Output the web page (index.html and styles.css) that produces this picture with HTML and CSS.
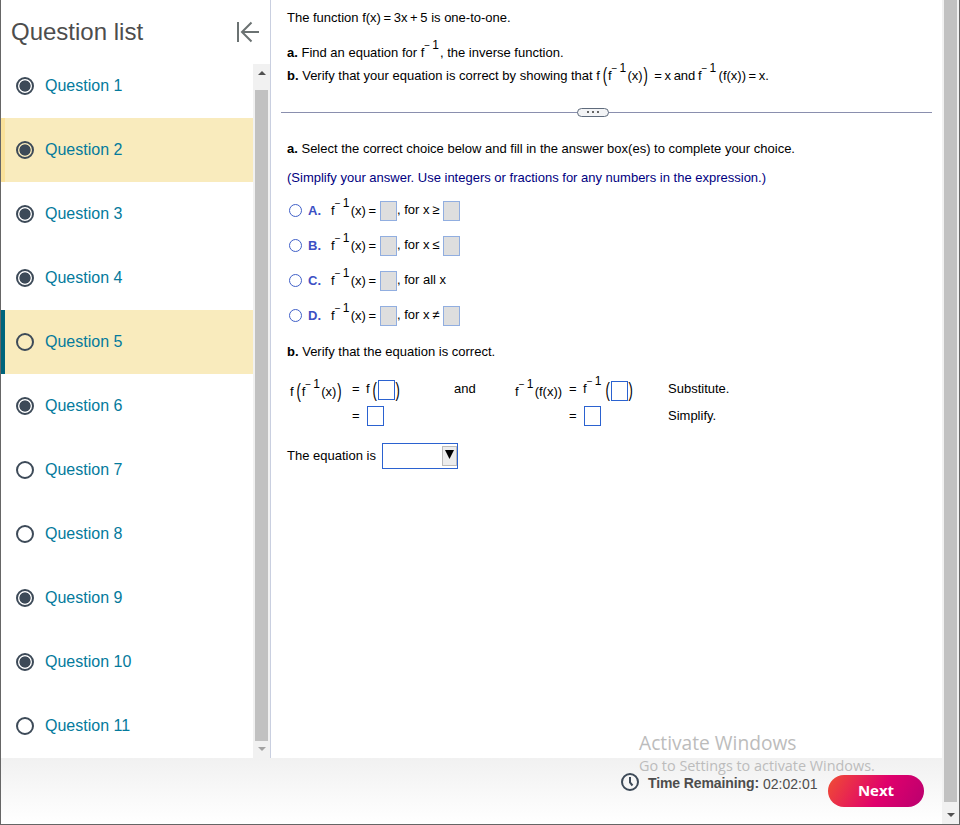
FILE: index.html
```html
<!DOCTYPE html>
<html lang="en">
<head>
    <meta charset="UTF-8">
    <meta name="viewport" content="width=device-width, initial-scale=1.0">
    <title>Question list</title>
    <link rel="stylesheet" href="styles.css">
</head>
<body>
<div class="window">
    <div class="page">
        <div class="top">
            <aside class="sidebar">
                <header class="sidebar-header">
                    <h1>Question list</h1>
                    <svg class="collapse" width="24" height="22" viewBox="0 0 24 22" fill="none" stroke="#6b7272" stroke-width="2">
                        <path d="M2 1v20M23 11H6M15.500 1.500L6 11l9.500 9.500"/>
                    </svg>
                </header>
                <div class="list-wrap">
                    <ul class="list">
                        <li><span class="dot done"></span><a>Question 1</a></li>
                        <li class="marked"><span class="dot done"></span><a>Question 2</a></li>
                        <li><span class="dot done"></span><a>Question 3</a></li>
                        <li><span class="dot done"></span><a>Question 4</a></li>
                        <li class="marked current"><span class="dot"></span><a>Question 5</a></li>
                        <li><span class="dot done"></span><a>Question 6</a></li>
                        <li><span class="dot"></span><a>Question 7</a></li>
                        <li><span class="dot"></span><a>Question 8</a></li>
                        <li><span class="dot done"></span><a>Question 9</a></li>
                        <li><span class="dot done"></span><a>Question 10</a></li>
                        <li><span class="dot"></span><a>Question 11</a></li>
                    </ul>
                    <div class="scrollbar">
                        <span class="arrow up"></span>
                        <span class="thumb"></span>
                        <span class="arrow down light"></span>
                    </div>
                </div>
            </aside>

            <main class="content">
                <p class="line">The function <span class="m">f(x) = 3x + 5</span> is one-to-one.</p>
                <p class="line find"><b>a.</b> Find an equation for f<span class="sup"><i>−</i>1</span> , the inverse function.</p>
                <p class="line show"><b>b.</b> Verify that your equation is correct by showing that f<span class="big open">(</span>f<span class="sup"><i>−</i>1</span>(x)<span class="big">)</span> <span class="m eq">= x and f<span class="sup"><i>−</i>1</span>(f(x)) = x.</span></p>

                <div class="divider"><span class="pill"><i></i><i></i><i></i></span></div>

                <p class="line select"><b>a.</b> Select the correct choice below and fill in the answer box(es) to complete your choice.</p>
                <p class="line hint">(Simplify your answer. Use integers or fractions for any numbers in the expression.)</p>

                <div class="choices">
                    <div class="choice"><span class="radio"></span><b>A.</b><span class="fn m">f<span class="sup"><i>−</i>1</span>(x) =</span><span class="box off"></span><span class="for">, for <span class="m">x ≥</span></span><span class="box off"></span></div>
                    <div class="choice"><span class="radio"></span><b>B.</b><span class="fn m">f<span class="sup"><i>−</i>1</span>(x) =</span><span class="box off"></span><span class="for">, for <span class="m">x ≤</span></span><span class="box off"></span></div>
                    <div class="choice"><span class="radio"></span><b>C.</b><span class="fn m">f<span class="sup"><i>−</i>1</span>(x) =</span><span class="box off"></span><span class="for">, for all x</span></div>
                    <div class="choice"><span class="radio"></span><b>D.</b><span class="fn m">f<span class="sup"><i>−</i>1</span>(x) =</span><span class="box off"></span><span class="for">, for <span class="m">x ≠</span></span><span class="box off"></span></div>
                </div>

                <p class="line verify"><b>b.</b> Verify that the equation is correct.</p>

                <div class="proof">
                    <span class="low">f<span class="big open">(</span>f<span class="sup"><i>−</i>1</span>(x)<span class="big">)</span></span>
                    <span>=</span>
                    <span class="rhs first">f<span class="big open">(</span><span class="box"></span><span class="big">)</span></span>
                    <span>and</span>
                    <span class="low">f<span class="sup"><i>−</i>1</span>(f(x))</span>
                    <span>=</span>
                    <span class="rhs">f<span class="sup"><i>−</i>1</span><span class="big open">(</span><span class="box"></span><span class="big">)</span></span>
                    <span>Substitute.</span>
                    <span></span>
                    <span>=</span>
                    <span class="rhs only"><span class="box"></span></span>
                    <span></span>
                    <span></span>
                    <span>=</span>
                    <span class="rhs only"><span class="box"></span></span>
                    <span>Simplify.</span>
                </div>

                <div class="result">
                    <span class="label">The equation is</span>
                    <span class="dropdown"><span class="drop-button"><svg width="9" height="9" viewBox="0 0 9 9"><path d="M0 0h9L4.500 9z"/></svg></span></span>
                </div>
            </main>
        </div>

        <footer class="footer">
            <svg class="clock" width="18" height="18" viewBox="0 0 18 18" fill="none" stroke="#3d4a58" stroke-width="2">
                <circle cx="9" cy="9" r="8"/>
                <path d="M9 4v5.500l2.500 3"/>
            </svg>
            <b>Time Remaining:</b>
            <span class="time">02:02:01</span>
            <button type="button" class="next">Next</button>
        </footer>

        <div class="watermark">
            <div class="wm-title">Activate Windows</div>
            <div class="wm-text">Go to Settings to activate Windows.</div>
        </div>
    </div>
    <div class="scrollbar page-scroll">
        <span class="thumb"></span>
        <span class="arrow down"></span>
    </div>
</div>
</body>
</html>
```
FILE: styles.css
```css
* {
    box-sizing: border-box;
}
body {
    margin: 0;
    background-color: white;
    color: black;
    font-family: "Liberation Sans", Arial, sans-serif;
    font-size: 13px;
}
.window {
    display: flex;
    width: 960px;
    height: 825px;
    border: 1px solid #666666;
    border-top: none;
    overflow: hidden;
}
.page {
    position: relative;
    display: flex;
    flex-direction: column;
    width: 941px;
}
.top {
    display: flex;
    height: 758px;
}

/* sidebar */
.sidebar {
    display: flex;
    flex-direction: column;
    width: 270px;
    border-right: 1px solid #c9cfe0;
}
.sidebar-header {
    display: flex;
    align-items: center;
    justify-content: space-between;
    height: 64px;
    padding: 0 10px;
}
.sidebar-header h1 {
    margin: 0;
    color: #4d4d4d;
    font-size: 24px;
    font-weight: normal;
    line-height: 64px;
}
.list-wrap {
    display: flex;
    height: 694px;
}
.list {
    width: 252px;
    margin: 0;
    padding: 0;
    list-style: none;
    overflow: hidden;
}
.list li {
    display: flex;
    align-items: center;
    height: 64px;
    padding-left: 11px;
    border-left: 4px solid transparent;
    font-size: 16px;
}
.list li:first-child {
    height: 54px;
    padding-bottom: 10px;
}
.list li.marked {
    background-color: #f9ebbd;
    border-left-color: #fae19a;
}
.list li.current {
    border-left-color: #00647b;
}
.list a {
    color: #047a9c;
    line-height: 20px;
}
.dot {
    width: 18px;
    height: 18px;
    margin-right: 11px;
    border: 2px solid #3d4a58;
    border-radius: 50%;
}
.dot.done {
    background-image: radial-gradient(circle at center, #3d4a58 5.2px, transparent 6px);
}

/* scrollbars */
.scrollbar {
    display: flex;
    flex-direction: column;
    align-items: center;
    width: 17px;
    background-color: #f1f1f1;
}
.thumb {
    flex: 1;
    width: 13px;
    background-color: #c1c1c1;
}
.arrow {
    height: 17px;
    display: flex;
    align-items: center;
}
.arrow.up {
    height: 26px;
    padding-bottom: 8px;
}
.arrow::after {
    content: "";
    border-left: 4px solid transparent;
    border-right: 4px solid transparent;
}
.arrow.up::after {
    border-bottom: 4px solid #505050;
}
.arrow.down::after {
    border-top: 4px solid #505050;
}
.arrow.light {
    padding-bottom: 2px;
}
.arrow.light::after {
    border-top-color: #a3a3a3;
}
.page-scroll {
    padding-bottom: 2px;
}
.page-scroll .arrow {
    height: 20px;
    padding-top: 6px;
}

/* exercise */
.content {
    flex: 1;
    padding: 8px 10px 0 16px;
}
.line {
    height: 20px;
    margin: 0;
    line-height: 20px;
    white-space: nowrap;
}
.find {
    margin-top: 15px;
}
.show {
    margin-top: 3px;
}
.select {
    margin-top: 21px;
}
.hint {
    margin-top: 9px;
    color: #00007f;
}
.m {
    word-spacing: -1px;
}
.eq {
    margin-left: 2px;
}
.sup {
    position: relative;
    top: -8px;
    display: inline-block;
    width: 16px;
    line-height: 1;
    font-size: 12px;
}
.find .sup {
    margin-right: -4px;
}
.eq .sup {
    width: 17px;
}
.sup i {
    display: inline-block;
    width: 8px;
    font-size: 10px;
    font-style: normal;
}
/* tall, thin parentheses */
.big {
    display: inline-block;
    width: 6px;
    line-height: 1;
    text-align: center;
    transform: scaleY(1.5);
}
.big.open {
    margin-left: 2px;
}
.divider {
    display: flex;
    align-items: center;
    justify-content: center;
    height: 12px;
    margin: 20px 0 0 -6px;
    background: linear-gradient(#8a8fae, #8a8fae) 0 6px / 100% 1px no-repeat;
}
.pill {
    display: flex;
    align-items: center;
    justify-content: center;
    gap: 3px;
    width: 32px;
    height: 9px;
    margin-left: -28px;
    border: 1px solid #5f6b7c;
    border-radius: 5px;
    background-color: #f3f4f6;
}
.pill i {
    width: 2px;
    height: 2px;
    background-color: #666666;
}
.choices {
    margin-top: 10px;
}
.choice {
    display: flex;
    height: 35px;
    padding-left: 2px;
    line-height: 24px;
    white-space: nowrap;
}
.radio {
    width: 13px;
    height: 13px;
    margin: 6px 6px 0 0;
    border: 1px solid #4060c8;
    border-radius: 50%;
}
.choice b {
    width: 23px;
    padding-top: 1px;
    color: #3c50c4;
}
.fn {
    width: 49px;
    padding-top: 1px;
}
.box {
    display: inline-block;
    width: 17px;
    height: 20px;
    border: 1px solid #2b62d0;
    background-color: white;
}
.box.off {
    margin-top: 3px;
    border-color: #91aee0;
    background-color: #dedede;
}
.for {
    width: 46px;
}
.verify {
    margin-top: 4px;
}
.proof {
    display: grid;
    grid-template-columns: 62px 14px 88px 61px 54px 14px 85px 80px;
    grid-template-rows: 27px 27px;
    margin-top: 17px;
    padding-left: 3px;
    line-height: 20px;
    white-space: nowrap;
}
.low {
    padding-top: 3px;
}
.rhs {
    display: flex;
    height: 24px;
}
.rhs .sup {
    line-height: 20px;
}
.rhs .big {
    height: 20px;
    margin-top: 2px;
    line-height: 20px;
}
.rhs .box {
    margin-top: 2px;
}
.rhs.first .box {
    margin-top: 1px;
}
.rhs.only .box {
    margin: 0 0 0 1px;
}
.result {
    display: flex;
    margin-top: 10px;
}
.label {
    width: 95px;
    line-height: 26px;
}
.dropdown {
    display: flex;
    justify-content: flex-end;
    width: 76px;
    height: 26px;
    padding: 2px 0;
    border: 1px solid #2b62d0;
}
.drop-button {
    display: flex;
    justify-content: center;
    width: 15px;
    height: 20px;
    padding-top: 3px;
    border: 1px solid #bbbbbb;
    background-color: #ececec;
}

/* footer */
.footer {
    display: flex;
    height: 66px;
    padding-left: 620px;
    background-image: linear-gradient(#f1f1f1, #ffffff);
    color: #4d4d4d;
    font-size: 14px;
    line-height: 20px;
    white-space: nowrap;
}
.clock {
    margin: 15px 9px 0 0;
}
.footer b {
    width: 115px;
    padding-top: 15px;
    letter-spacing: -0.1px;
}
.time {
    width: 65px;
    padding-top: 16px;
}
.next {
    width: 96px;
    height: 32px;
    margin-top: 17px;
    padding: 0 0 2px;
    border: none;
    border-radius: 16px;
    background-image: linear-gradient(120deg, #f04e33, #e0006c 55%, #b9006f);
    color: white;
    font-family: "Open Sans", sans-serif;
    font-size: 15px;
    font-weight: bold;
}
.watermark {
    position: absolute;
    left: 638px;
    top: 730px;
    color: #bcbcbc;
    font-family: "Open Sans", sans-serif;
    white-space: nowrap;
}
.wm-title {
    font-size: 19.2px;
    line-height: 26px;
}
.wm-text {
    font-size: 14.4px;
    line-height: 20px;
}
```
